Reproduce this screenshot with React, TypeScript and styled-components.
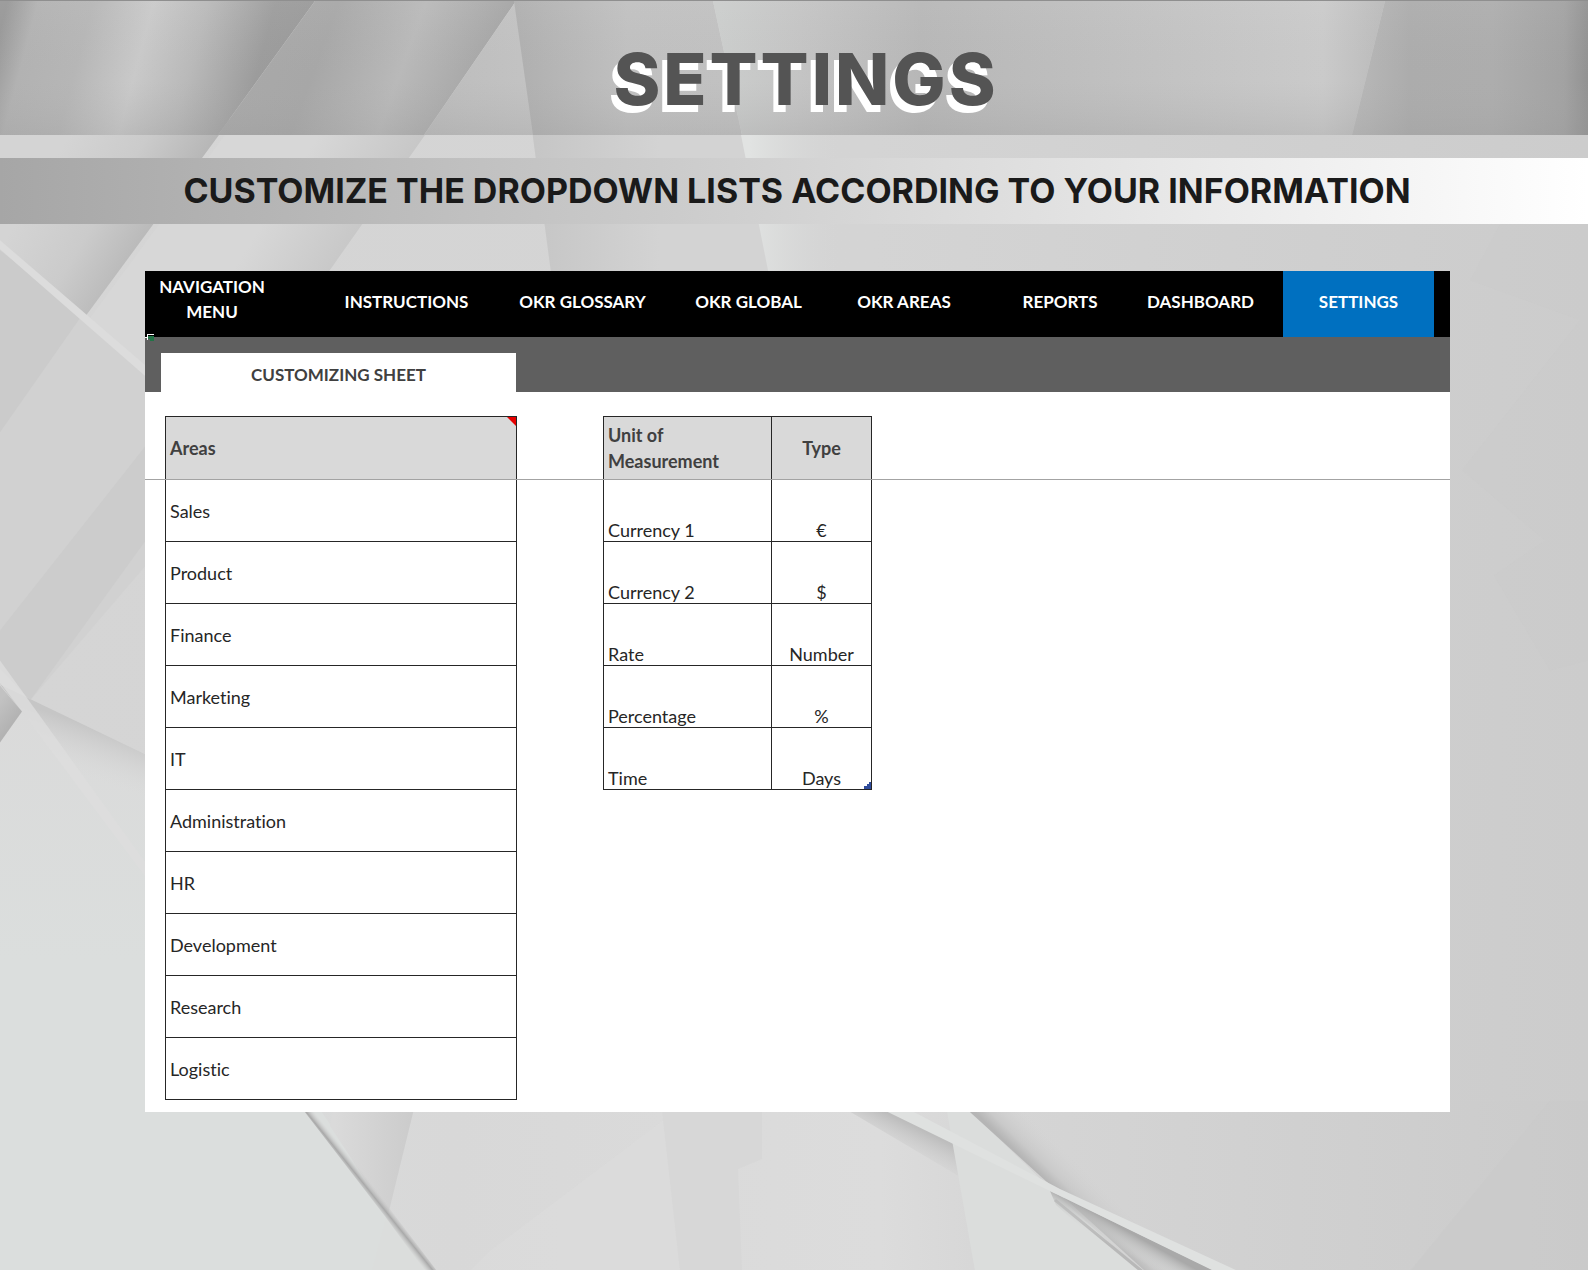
import React from "react";
import styled, { createGlobalStyle } from "styled-components";

const GlobalStyle = createGlobalStyle`
  *, *::before, *::after { box-sizing: border-box; }
  body { margin: 0; background: #d3d3d3; }
`;

const sheetFont = `Lato, "Open Sans", sans-serif`;
const titleFont = `Inter, "Open Sans", sans-serif`;

const Page = styled.div`
  position: relative;
  min-height: 100vh;
  padding-bottom: 159px;
  font-family: ${sheetFont};
  isolation: isolate;
`;

const Backdrop = styled.svg`
  position: absolute;
  inset: 0;
  z-index: -1;
  width: 100%;
  height: 100%;
`;

const Hero = styled.header`
  position: relative;
  display: flex;
  justify-content: center;
  align-items: center;
  height: 135px;
  padding: 23px 0 0 24px;
  border-top: 1px solid #8f8f8f;
  isolation: isolate;
`;

const Title = styled.h1`
  margin: 0;
  font: 800 71px/85px ${titleFont};
  letter-spacing: 3px;
  color: #545454;
  text-shadow: -5px 7px 0 #fff;
`;

const Banner = styled.div`
  display: flex;
  justify-content: center;
  align-items: center;
  height: 66px;
  margin-top: 23px;
  padding-left: 6px;
  background: linear-gradient(90deg, #a6a6a6, #fff);
`;

const Subtitle = styled.h2`
  margin: 0;
  font: 700 34px/40px ${titleFont};
  color: #1a1a1a;
  white-space: nowrap;
`;

const Sheet = styled.main`
  margin: 47px 138px 0 145px;
  padding-bottom: 12px;
  background: #fff;
`;

const Nav = styled.nav`
  display: grid;
  grid-template-columns:
    minmax(0, 134fr) minmax(0, 60fr) minmax(0, 135fr) minmax(0, 217fr) minmax(0, 115fr)
    minmax(0, 196fr) minmax(0, 116fr) minmax(0, 165fr) minmax(0, 151fr) minmax(0, 16fr);
  height: 66px;
  background: #000;
  color: #fff;
  font-size: 17px;
  font-weight: 700;
  line-height: 25px;
  text-align: center;
`;

const NavHeading = styled.div`
  grid-column: 1;
  padding: 3px 8px 0;
`;

const NavLink = styled.a<{ $active?: boolean; $first?: boolean }>`
  display: flex;
  justify-content: center;
  align-items: center;
  padding-bottom: 5px;
  grid-column-start: ${(p) => (p.$first ? 3 : "auto")};
  background: ${(p) => (p.$active ? "#0070c0" : "transparent")};
  color: #fff;
  text-decoration: none;
  white-space: nowrap;
`;

const TabBar = styled.div`
  position: relative;
  display: flex;
  height: 55px;
  padding: 16px 16px 0;
  background: #5f5f5f;
`;

const SelectionMark = styled.svg`
  position: absolute;
  top: -3px;
  left: 0;
`;

const SheetTab = styled.h3`
  width: 355px;
  height: 39px;
  margin: 0;
  background: #fff;
  color: #404040;
  font-size: 17px;
  font-weight: 700;
  line-height: 44px;
  text-align: center;
`;

const Tables = styled.div`
  position: relative;
  display: flex;
  align-items: flex-start;
  gap: 86px;
  padding: 24px 20px 0;
`;

const FreezeLine = styled.div`
  position: absolute;
  top: 87px;
  left: 0;
  right: 0;
  height: 1px;
  background: #a3a3a3;
`;

const Table = styled.table<{ $width: number }>`
  width: ${(p) => p.$width}px;
  table-layout: fixed;
  border-collapse: collapse;
  color: #262626;
  font-size: 18px;
  font-variant-ligatures: none;
  line-height: 26px;
`;

const HeadCell = styled.th<{ $center?: boolean; $width?: number }>`
  position: relative;
  width: ${(p) => (p.$width ? `${p.$width}px` : "auto")};
  height: 63px;
  padding: 0 4px;
  border: 1px solid #262626;
  background: #d9d9d9;
  color: #404040;
  font-weight: 700;
  text-align: ${(p) => (p.$center ? "center" : "left")};
`;

const Cell = styled.td<{ $center?: boolean; $bottom?: boolean }>`
  position: relative;
  height: 62px;
  padding: 0 4px;
  border: 1px solid #262626;
  line-height: ${(p) => (p.$bottom ? 22 : 26)}px;
  text-align: ${(p) => (p.$center ? "center" : "left")};
  vertical-align: ${(p) => (p.$bottom ? "bottom" : "middle")};
`;

const NoteMark = styled.svg`
  position: absolute;
  top: 0;
  right: 0;
`;

const ResizeMark = styled.svg`
  position: absolute;
  right: 0;
  bottom: 0;
`;

const links = ["INSTRUCTIONS", "OKR GLOSSARY", "OKR GLOBAL", "OKR AREAS", "REPORTS", "DASHBOARD", "SETTINGS"];

const areas = ["Sales", "Product", "Finance", "Marketing", "IT", "Administration", "HR", "Development", "Research", "Logistic"];

const units = [
  ["Currency 1", "€"],
  ["Currency 2", "$"],
  ["Rate", "Number"],
  ["Percentage", "%"],
  ["Time", "Days"],
];

type Stop = [number, string, number?];

function Fade({ id, from, to, stops }: { id: string; from: [number, number]; to: [number, number]; stops: Stop[] }) {
  return (
    <linearGradient id={id} gradientUnits="userSpaceOnUse" x1={from[0]} y1={from[1]} x2={to[0]} y2={to[1]}>
      {stops.map(([offset, color, opacity]) => (
        <stop key={offset} offset={offset} stopColor={color} stopOpacity={opacity ?? 1} />
      ))}
    </linearGradient>
  );
}

function PageBackdrop() {
  return (
    <Backdrop viewBox="0 0 1588 1270" preserveAspectRatio="none" aria-hidden="true">
      <defs>
        <Fade id="base" from={[0, 0]} to={[1588, 0]} stops={[[0, "#d5d5d5"], [0.55, "#d4d4d4"], [1, "#cccccc"]]} />
        <Fade id="fold1" from={[60, 150]} to={[175, 220]} stops={[[0, "#d4d4d4"], [0.5, "#cbcbcb"], [1, "#b4b4b4"]]} />
        <Fade id="fold2" from={[290, 180]} to={[385, 240]} stops={[[0, "#d7d7d7"], [1, "#c3c3c3"]]} />
        <Fade id="fold3" from={[535, 0]} to={[660, 0]} stops={[[0, "#c6c6c6"], [1, "#d3d3d3"]]} />
        <Fade id="glow" from={[750, 0]} to={[850, 0]} stops={[[0, "#e1e3e2"], [1, "#d3d3d3", 0]]} />
        <Fade id="lowerLeft" from={[0, 700]} to={[0, 960]} stops={[[0, "#dadada"], [1, "#dbdedd"]]} />
        <Fade id="shade" from={[80, 722]} to={[64, 770]} stops={[[0, "#c6c6c6"], [1, "#d9d9d9", 0]]} />
        <Fade id="corner" from={[0, 700]} to={[26, 720]} stops={[[0, "#c2c2c2"], [1, "#adadad"]]} />
        <Fade id="bottom" from={[300, 0]} to={[1588, 0]} stops={[[0, "#d9dada"], [0.12, "#d8d8d8"], [0.45, "#dcdcdc"], [0.55, "#d5d5d5"], [1, "#cbcbcb"]]} />
        <Fade id="spike" from={[335, 0]} to={[410, 0]} stops={[[0, "#dadada"], [1, "#cccccc"]]} />
        <Fade id="crease" from={[350, 1176]} to={[360, 1168]} stops={[[0, "#c4c4c4", 0], [0.5, "#a9a9a9"], [1, "#d0d0d0", 0]]} />
        <Fade id="ray" from={[985, 1160]} to={[968, 1195]} stops={[[0, "#bdbdbd"], [1, "#dadada", 0]]} />
        <Fade id="ray2" from={[1010, 1145]} to={[1034, 1120]} stops={[[0, "#b5b5b5"], [0.3, "#c9c9c9"], [1, "#d2d2d2", 0]]} />
        <Fade id="ray3" from={[1120, 1226]} to={[1110, 1244]} stops={[[0, "#a9a9a9"], [1, "#dbdddc", 0]]} />
      </defs>
      <rect width="1588" height="1270" fill="url(#base)" />
      <path d="M0 120H230L0 432Z" fill="url(#fold1)" />
      <path d="M225 135H425L30 695L0 665V440Z" fill="url(#fold2)" />
      <path d="M532 130H745L775 280H552Z" fill="url(#fold3)" />
      <path d="M740 130H860V280H770Z" fill="url(#glow)" />
      <path d="M0 242L150 376V560L30 700L0 665Z" fill="#d1d1d1" />
      <path d="M82 315L0 432V250Z" fill="#cbcbcb" />
      <path d="M150 440L0 630V668L30 700L150 534Z" fill="#cccccc" />
      <path d="M0 240L150 369V380L0 249Z" fill="#dcdcdc" />
      <path d="M0 684L150 756V1270H0Z" fill="url(#lowerLeft)" />
      <path d="M0 684L150 756V880L22 711Z" fill="url(#shade)" />
      <path d="M0 660L150 868V882L0 682Z" fill="#dddddd" fillOpacity="0.8" />
      <path d="M0 685L22 711L0 742Z" fill="url(#corner)" />
      <path d="M140 1100H440V1270H140Z" fill="#dbdedd" />
      <path d="M314 1100H1588V1270H430Z" fill="url(#bottom)" />
      <path d="M335 1100H416L388 1214L330 1125Z" fill="url(#spike)" />
      <path d="M388 1210L372 1270H432Z" fill="#dbdddc" />
      <path d="M665 1118L490 1250L470 1270H680Z" fill="#dcdcdc" fillOpacity="0.7" />
      <path d="M662 1110H762V1158L738 1168L742 1270H680Z" fill="#d7d7d7" />
      <path d="M300 1105L384 1214L425 1270H437L390 1208L320 1105Z" fill="url(#crease)" />
      <path d="M840 1105H890L1060 1195V1235Z" fill="url(#ray)" />
      <path d="M946 1105H965L1055 1192L1140 1270H975Z" fill="#dbdddc" />
      <path d="M963 1105L1145 1270H1240L1150 1105Z" fill="url(#ray2)" />
      <path d="M1056 1198L1144 1270H1139L1054 1200Z" fill="#b8b8b8" />
      <path d="M1050 1190L1215 1270H1130L1056 1204Z" fill="url(#ray3)" />
      <path d="M875 1105H902L1060 1188L1238 1270H1214L1050 1190Z" fill="#dfe1e0" />
      <path d="M1550 1100H1588V1270H1410Z" fill="#c9c9c9" fillOpacity="0.6" />
      <path d="M1470 280L1580 320L1462 470L1545 540L1494 575L1550 670L1588 660V224H1500Z" fill="#c9c9c9" fillOpacity="0.2" />
    </Backdrop>
  );
}

function HeroBackdrop() {
  return (
    <Backdrop viewBox="0 0 1588 135" preserveAspectRatio="none" aria-hidden="true">
      <defs>
        <Fade id="h1" from={[0, 30]} to={[285, 105]} stops={[[0, "#989898"], [0.1, "#b2b2b2"], [0.28, "#b6b6b6"], [0.48, "#c9c9c9"], [0.66, "#b9b9b9"], [0.88, "#9c9c9c"], [1, "#9a9a9a"]]} />
        <Fade id="h2" from={[250, 40]} to={[470, 120]} stops={[[0, "#a9a9a9"], [0.3, "#a7a7a7"], [0.65, "#b9b9b9"], [1, "#a5a5a5"]]} />
        <Fade id="h3" from={[425, 0]} to={[535, 0]} stops={[[0, "#bcbcbc"], [1, "#c3c3c3"]]} />
        <Fade id="h4" from={[515, 0]} to={[740, 0]} stops={[[0, "#afafaf"], [0.5, "#c0c0c0"], [1, "#c1c1c1"]]} />
        <Fade id="h5" from={[720, 0]} to={[1390, 0]} stops={[[0, "#cbcdcc"], [0.12, "#c4c4c4"], [0.3, "#b7b7b7"], [0.65, "#c2c2c2"], [0.9, "#cacaca"], [1, "#b9b9b9"]]} />
        <Fade id="h6" from={[1350, 0]} to={[1588, 0]} stops={[[0, "#b9b9b9"], [0.25, "#acacac"], [0.6, "#adadad"], [0.9, "#a2a2a2"], [1, "#929292"]]} />
        <Fade id="dim" from={[0, 0]} to={[0, 135]} stops={[[0, "#fff", 0.05], [0.6, "#aaa", 0], [1, "#999", 0.25]]} />
      </defs>
      <path d="M0 0H315L218 135H0Z" fill="url(#h1)" />
      <path d="M315 0H516L424 135H218Z" fill="url(#h2)" />
      <path d="M516 0L534 135H424Z" fill="url(#h3)" />
      <path d="M514 0H713L742 135H533Z" fill="url(#h4)" />
      <path d="M713 0H1385L1352 135H742Z" fill="url(#h5)" />
      <path d="M1385 0H1588V135H1352Z" fill="url(#h6)" />
      <rect width="1588" height="135" fill="url(#dim)" />
    </Backdrop>
  );
}

export default function App() {
  return (
    <>
      <GlobalStyle />
      <Page>
        <PageBackdrop />
        <Hero>
          <HeroBackdrop />
          <Title>SETTINGS</Title>
        </Hero>
        <Banner>
          <Subtitle>CUSTOMIZE THE DROPDOWN LISTS ACCORDING TO YOUR INFORMATION</Subtitle>
        </Banner>
        <Sheet>
          <Nav>
            <NavHeading>NAVIGATION MENU</NavHeading>
            {links.map((name, i) => (
              <NavLink key={name} href="#" $first={i === 0} $active={name === "SETTINGS"}>
                {name}
              </NavLink>
            ))}
          </Nav>
          <TabBar>
            <SelectionMark width="9" height="7" aria-hidden="true">
              <path d="M0 3H2V0H9V1H3V6H2V4H0Z" fill="#fff" />
              <path d="M3 2H9V7H5V5H3Z" fill="#217346" />
            </SelectionMark>
            <SheetTab>CUSTOMIZING SHEET</SheetTab>
          </TabBar>
          <Tables>
            <Table $width={352}>
              <thead>
                <tr>
                  <HeadCell scope="col">
                    Areas
                    <NoteMark width="9" height="9" aria-hidden="true">
                      <path d="M0 0H9V9Z" fill="#e60000" />
                    </NoteMark>
                  </HeadCell>
                </tr>
              </thead>
              <tbody>
                {areas.map((area) => (
                  <tr key={area}>
                    <Cell>{area}</Cell>
                  </tr>
                ))}
              </tbody>
            </Table>
            <Table $width={269}>
              <thead>
                <tr>
                  <HeadCell scope="col" $width={168}>Unit of Measurement</HeadCell>
                  <HeadCell scope="col" $center>Type</HeadCell>
                </tr>
              </thead>
              <tbody>
                {units.map(([unit, type], i) => (
                  <tr key={unit}>
                    <Cell $bottom>{unit}</Cell>
                    <Cell $bottom $center>
                      {type}
                      {i === units.length - 1 && (
                        <ResizeMark width="7" height="7" aria-hidden="true">
                          <path d="M5 0H7V7H0V4H3V2H5Z" fill="#2f4b9b" />
                        </ResizeMark>
                      )}
                    </Cell>
                  </tr>
                ))}
              </tbody>
            </Table>
            <FreezeLine />
          </Tables>
        </Sheet>
      </Page>
    </>
  );
}
